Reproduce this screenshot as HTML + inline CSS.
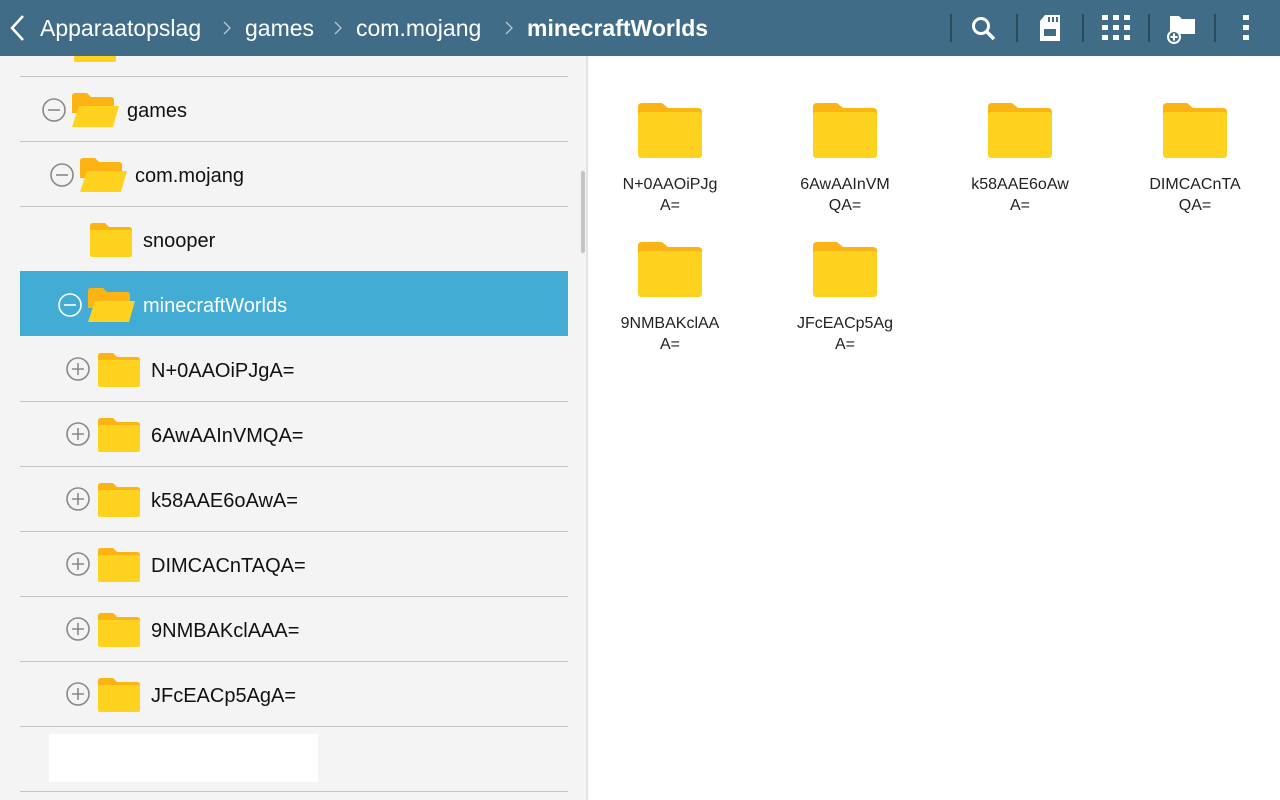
<!DOCTYPE html>
<html><head><meta charset="utf-8"><style>
*{margin:0;padding:0;box-sizing:border-box}
body{width:1280px;height:800px;overflow:hidden;font-family:"Liberation Sans",sans-serif;background:#fff;position:relative}
.hdr{position:absolute;left:0;top:0;width:1280px;height:56px;background:#416c87;color:#fff}
.hdr span{position:absolute;top:15px;font-size:23px;white-space:nowrap}
.vs{position:absolute;top:14px;width:2px;height:28px;background:#2c4a5d}
.left{position:absolute;left:0;top:56px;width:588px;height:744px;background:#f4f4f4;overflow:hidden;border-right:2px solid #e2e2e2}
.line{position:absolute;left:20px;width:548px;height:1px;background:#c4c4c4}
.t{position:absolute;font-size:20px;color:#111;white-space:nowrap}
.ico{position:absolute}
.right{position:absolute;left:588px;top:56px;width:692px;height:744px;background:#fff}
.lbl{position:absolute;width:140px;text-align:center;font-size:16px;line-height:21px;color:#222}
</style></head><body>
<div class="hdr">
<svg class="ico" style="left:8px;top:14px" width="18" height="28" viewBox="0 0 18 28"><path d="M15 2 L4 14 L15 26" fill="none" stroke="#fff" stroke-width="2.5"/></svg>
<span style="left:40px">Apparaatopslag</span>
<svg class="ico" style="left:222px;top:21px" width="10" height="14"><path d="M2 1 L8 7 L2 13" fill="none" stroke="#b8c8d4" stroke-width="1.3"/></svg>
<span style="left:245px">games</span>
<svg class="ico" style="left:333px;top:21px" width="10" height="14"><path d="M2 1 L8 7 L2 13" fill="none" stroke="#b8c8d4" stroke-width="1.3"/></svg>
<span style="left:356px">com.mojang</span>
<svg class="ico" style="left:504px;top:21px" width="10" height="14"><path d="M2 1 L8 7 L2 13" fill="none" stroke="#b8c8d4" stroke-width="1.3"/></svg>
<span style="left:527px;font-weight:bold">minecraftWorlds</span>
<div class="vs" style="left:950px"></div><div class="vs" style="left:1016px"></div><div class="vs" style="left:1082px"></div><div class="vs" style="left:1148px"></div><div class="vs" style="left:1214px"></div>
<svg class="ico" style="left:970px;top:15px" width="28" height="28" viewBox="0 0 28 28"><circle cx="11" cy="11" r="7.5" fill="none" stroke="#fff" stroke-width="3"/><path d="M16 16 L24 24" stroke="#fff" stroke-width="3.5"/></svg>
<svg class="ico" style="left:1039px;top:14px" width="22" height="28" viewBox="0 0 22 28"><path d="M6 1 H21 V27 H1 V7 Z" fill="#fff"/><rect x="5" y="15" width="12" height="7" fill="#416c87"/><rect x="9" y="3" width="2" height="5" fill="#416c87"/><rect x="13" y="3" width="2" height="5" fill="#416c87"/><rect x="17" y="3" width="2" height="5" fill="#416c87"/></svg>
<svg class="ico" style="left:1102px;top:15px" width="28" height="26" viewBox="0 0 28 26"><g fill="#fff"><rect x="0" y="0" width="6" height="5"/><rect x="11" y="0" width="6" height="5"/><rect x="22" y="0" width="6" height="5"/><rect x="0" y="10" width="6" height="5"/><rect x="11" y="10" width="6" height="5"/><rect x="22" y="10" width="6" height="5"/><rect x="0" y="20" width="6" height="5"/><rect x="11" y="20" width="6" height="5"/><rect x="22" y="20" width="6" height="5"/></g></svg>
<svg class="ico" style="left:1166px;top:14px" width="30" height="30" viewBox="0 0 30 30"><path d="M4 2 H13 L16 5 H29 V20 H4 Z" fill="#fff"/><circle cx="8" cy="23" r="6" fill="#416c87" stroke="#fff" stroke-width="2"/><path d="M8 19.5V26.5M4.5 23H11.5" stroke="#fff" stroke-width="2"/></svg>
<svg class="ico" style="left:1242px;top:15px" width="8" height="26" viewBox="0 0 8 26"><g fill="#fff"><rect x="1" y="0" width="6" height="5"/><rect x="1" y="10" width="6" height="5"/><rect x="1" y="20" width="6" height="5"/></g></svg>
</div>

<div class="left">
<svg width="0" height="0" style="position:absolute"><defs>
<g id="fc"><path d="M0 3 Q0 0 3 0 H15 L19 4 H39 Q42 4 42 7 V12 H0Z" fill="#fbb413"/><rect x="0" y="7" width="42" height="27" rx="2" fill="#ffd21f"/></g>
<g id="fo"><path d="M0 3 Q0 0 3 0 H15 L19 4 H39 Q42 4 42 7 V20 H0Z" fill="#fbb413"/><path d="M7 13 H47 L41 34 H0 Z" fill="#ffd21f"/></g>
</defs></svg>
<svg class="ico" style="left:74px;top:-20px" width="42" height="26"><g transform="translate(0,-8)"><use href="#fc"/></g></svg>
<div class="line" style="top:20px"></div>
<svg class="ico" style="left:42px;top:42px" width="24" height="24"><circle cx="12" cy="12" r="11" fill="none" stroke="#888" stroke-width="1.6"/><path d="M6 12H18" stroke="#888" stroke-width="1.6"/></svg>
<svg class="ico" style="left:72px;top:37px" width="48" height="35"><use href="#fo"/></svg>
<div class="t" style="left:127px;top:44px">games</div>
<div class="line" style="top:85px"></div>
<svg class="ico" style="left:50px;top:107px" width="24" height="24"><circle cx="12" cy="12" r="11" fill="none" stroke="#888" stroke-width="1.6"/><path d="M6 12H18" stroke="#888" stroke-width="1.6"/></svg>
<svg class="ico" style="left:80px;top:102px" width="48" height="35"><use href="#fo"/></svg>
<div class="t" style="left:135px;top:109px">com.mojang</div>
<div class="line" style="top:150px"></div>
<svg class="ico" style="left:90px;top:167px" width="42" height="35"><use href="#fc"/></svg>
<div class="t" style="left:143px;top:174px">snooper</div>
<div class="line" style="top:215px"></div>
<div style="position:absolute;left:20px;top:215px;width:548px;height:65px;background:#43acd5"></div>
<svg class="ico" style="left:58px;top:237px" width="24" height="24"><circle cx="12" cy="12" r="11" fill="none" stroke="#fff" stroke-width="1.6"/><path d="M6 12H18" stroke="#fff" stroke-width="1.6"/></svg>
<svg class="ico" style="left:88px;top:232px" width="48" height="35"><use href="#fo"/></svg>
<div class="t" style="left:143px;top:239px;color:#fff">minecraftWorlds</div>

<div id="kids"></div>
<div style="position:absolute;left:49px;top:678px;width:269px;height:48px;background:#fff"></div>
<div class="line" style="top:735px"></div>
<div style="position:absolute;left:581px;top:115px;width:4px;height:82px;background:#c4c4c4;border-radius:2px"></div>
</div>

<div class="right"></div>
<script>
var names=["N+0AAOiPJgA=","6AwAAInVMQA=","k58AAE6oAwA=","DIMCACnTAQA=","9NMBAKclAAA=","JFcEACp5AgA="];
var h="";
names.forEach(function(n,i){var y=280+i*65;
h+='<div class="line" style="top:'+(y+65)+'px"></div>';
h+='<svg class="ico" style="left:66px;top:'+(y+21)+'px" width="24" height="24"><circle cx="12" cy="12" r="11" fill="none" stroke="#888" stroke-width="1.6"/><path d="M6 12H18M12 6V18" stroke="#888" stroke-width="1.6"/></svg>';
h+='<svg class="ico" style="left:98px;top:'+(y+17)+'px" width="42" height="35"><use href="#fc"/></svg>';
h+='<div class="t" style="left:151px;top:'+(y+24)+'px">'+n+'</div>';});
document.getElementById("kids").outerHTML=h;
var r="";
var split=[["N+0AAOiPJg","A="],["6AwAAInVM","QA="],["k58AAE6oAw","A="],["DIMCACnTA","QA="],["9NMBAKclAA","A="],["JFcEACp5Ag","A="]];
split.forEach(function(s,i){var c=i%4,row=Math.floor(i/4);var x=50+c*175,y=47+row*139;
r+='<svg class="ico" style="left:'+x+'px;top:'+y+'px" width="64" height="55" viewBox="0 0 64 55"><path d="M0 4 Q0 0 4 0 H24 L30 5 H60 Q64 5 64 9 V16 H0Z" fill="#fbb413"/><rect x="0" y="9" width="64" height="46" rx="3" fill="#ffd21f"/></svg>';
r+='<div class="lbl" style="left:'+(x-38)+'px;top:'+(y+71)+'px">'+s[0]+'<br>'+s[1]+'</div>';});
document.querySelector(".right").innerHTML=r;
</script>
</body></html>
